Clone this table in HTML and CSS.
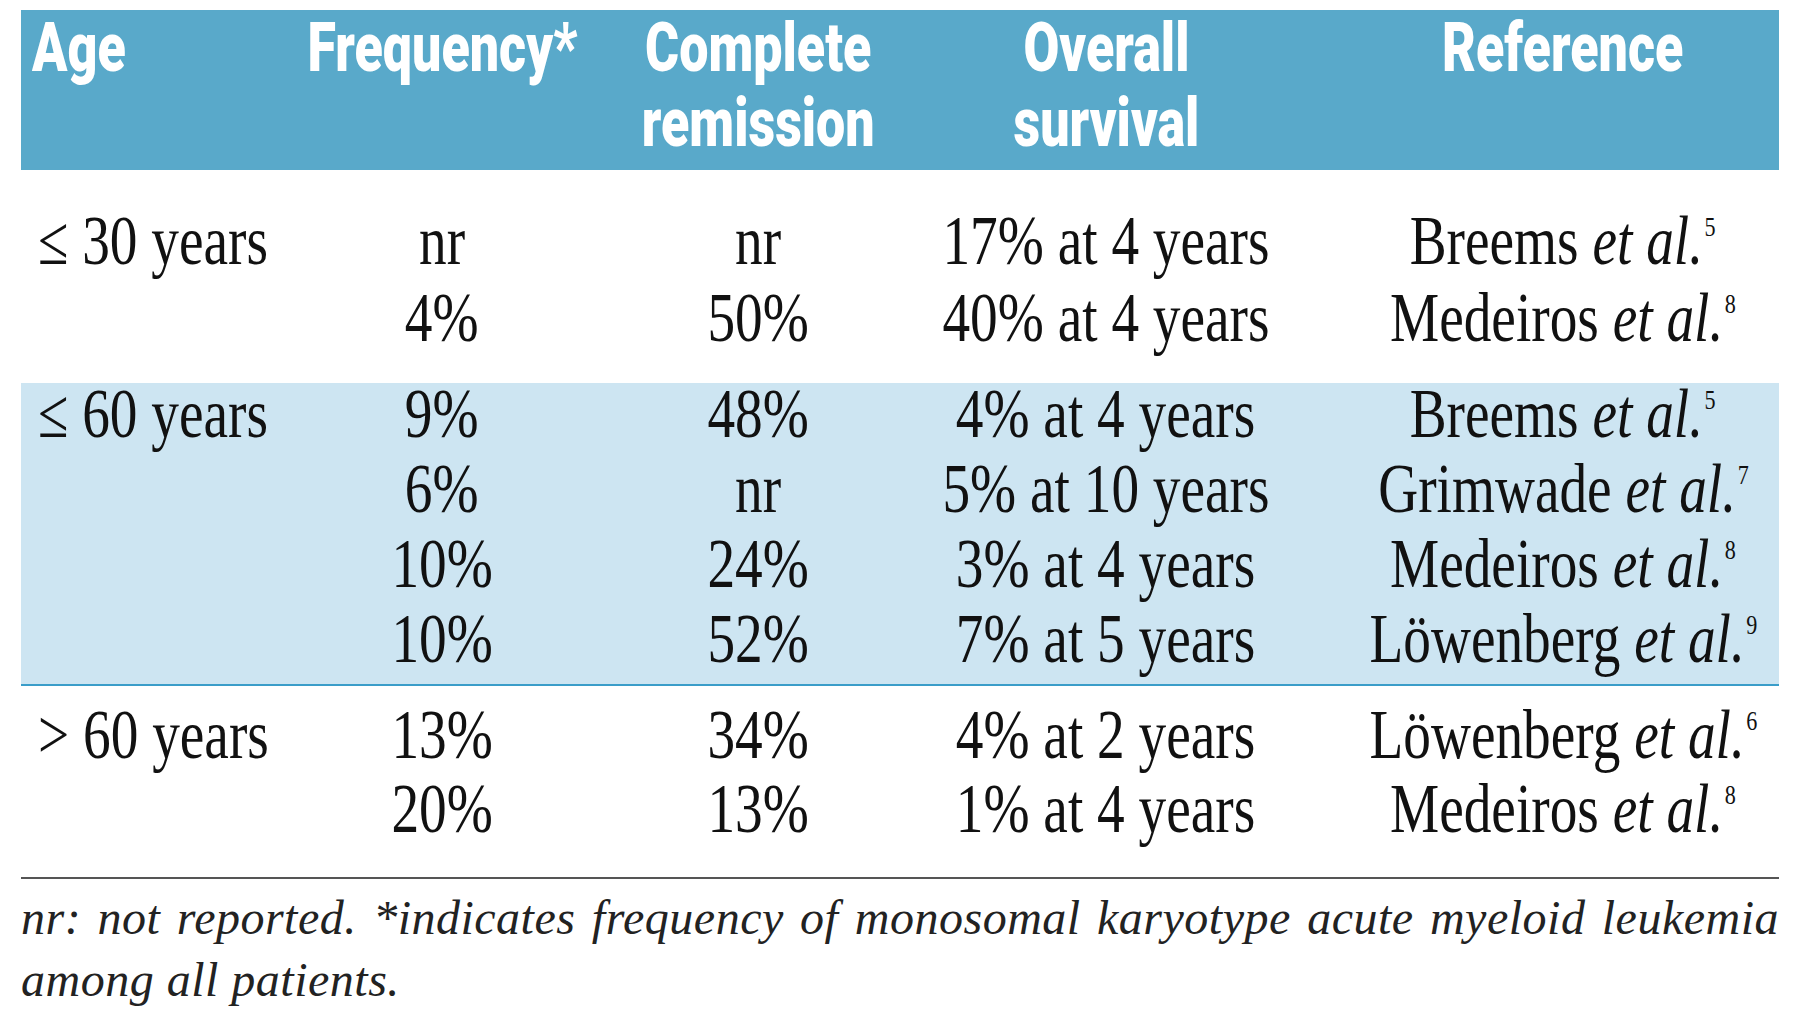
FILE: index.html
```html
<!DOCTYPE html>
<html>
<head>
<meta charset="utf-8">
<link rel="stylesheet" href="styles.css">
</head>
<body>
<div class="table">
  <div class="head grid">
    <div class="c age"><span class="hx">Age</span></div>
    <div class="c"><span class="hx">Frequency*</span></div>
    <div class="c"><span class="hx">Complete<br>remission</span></div>
    <div class="c"><span class="hx">Overall<br>survival</span></div>
    <div class="c ref"><span class="hx">Reference</span></div>
  </div>

  <div class="group g1 grid">
    <div class="c age"><span class="t">≤ 30 years</span></div>
    <div class="c"><span class="t">nr</span></div>
    <div class="c"><span class="t">nr</span></div>
    <div class="c"><span class="t">17% at 4 years</span></div>
    <div class="c ref"><span class="t">Breems <em>et al.</em><sup class="n">5</sup></span></div>

    <div class="c age"></div>
    <div class="c"><span class="t">4%</span></div>
    <div class="c"><span class="t">50%</span></div>
    <div class="c"><span class="t">40% at 4 years</span></div>
    <div class="c ref"><span class="t">Medeiros <em>et al.</em><sup class="n">8</sup></span></div>
  </div>

  <div class="group g2 grid">
    <div class="c age"><span class="t">≤ 60 years</span></div>
    <div class="c"><span class="t">9%</span></div>
    <div class="c"><span class="t">48%</span></div>
    <div class="c"><span class="t">4% at 4 years</span></div>
    <div class="c ref"><span class="t">Breems <em>et al.</em><sup class="n">5</sup></span></div>

    <div class="c age"></div>
    <div class="c"><span class="t">6%</span></div>
    <div class="c"><span class="t">nr</span></div>
    <div class="c"><span class="t">5% at 10 years</span></div>
    <div class="c ref"><span class="t">Grimwade <em>et al.</em><sup class="n">7</sup></span></div>

    <div class="c age"></div>
    <div class="c"><span class="t">10%</span></div>
    <div class="c"><span class="t">24%</span></div>
    <div class="c"><span class="t">3% at 4 years</span></div>
    <div class="c ref"><span class="t">Medeiros <em>et al.</em><sup class="n">8</sup></span></div>

    <div class="c age"></div>
    <div class="c"><span class="t">10%</span></div>
    <div class="c"><span class="t">52%</span></div>
    <div class="c"><span class="t">7% at 5 years</span></div>
    <div class="c ref"><span class="t">Löwenberg <em>et al.</em><sup class="n">9</sup></span></div>
  </div>

  <div class="group g3 grid">
    <div class="c age"><span class="t">&gt; 60 years</span></div>
    <div class="c"><span class="t">13%</span></div>
    <div class="c"><span class="t">34%</span></div>
    <div class="c"><span class="t">4% at 2 years</span></div>
    <div class="c ref"><span class="t">Löwenberg <em>et al.</em><sup class="n">6</sup></span></div>

    <div class="c age"></div>
    <div class="c"><span class="t">20%</span></div>
    <div class="c"><span class="t">13%</span></div>
    <div class="c"><span class="t">1% at 4 years</span></div>
    <div class="c ref"><span class="t">Medeiros <em>et al.</em><sup class="n">8</sup></span></div>
  </div>

  <p class="note">nr: not reported. *indicates frequency of monosomal karyotype acute myeloid leukemia among all patients.</p>
</div>
</body>
</html>
```

FILE: styles.css
```css
body {
  margin: 0;
  background: #ffffff;
}

.table {
  margin: 10px 0 0 21px;
  width: 1758px;
}

.grid {
  display: grid;
  grid-template-columns: 279px 284px 348px 348px 499px;
}

.head {
  background: #59a9ca;
  height: 160px;
  box-sizing: border-box;
  padding-top: 1px;
  color: #ffffff;
  font-family: Roboto, "Liberation Sans", Arial, sans-serif;
  font-weight: 900;
  font-size: 68px;
  line-height: 75px;
}

.c {
  display: flex;
  justify-content: center;
  align-items: flex-start;
  text-align: center;
  white-space: nowrap;
  min-width: 0;
}

.c.age {
  justify-content: flex-start;
  text-align: left;
}

.head .age {
  padding-left: 11px;
}

.ref {
  padding-left: 67px;
}

.hx {
  display: inline-block;
  flex: none;
  transform: scaleX(0.765);
}

.group {
  font-family: "Liberation Serif", "Times New Roman", serif;
  font-size: 70px;
  line-height: 61px;
  color: #111111;
}

.group .age {
  padding-left: 17px;
}

.t {
  display: inline-block;
  flex: none;
  transform: scaleX(0.79);
}

.age .hx,
.age .t {
  transform-origin: left center;
}

.g1 {
  padding: 40px 0 35px;
  row-gap: 16px;
}

.g2 {
  background: #cde5f2;
  padding: 0 0 15px;
  row-gap: 14px;
  border-bottom: 2px solid #3a9dc9;
}

.g3 {
  padding: 18px 0 38px;
  row-gap: 13px;
}

em {
  font-style: italic;
}

sup.n {
  font-size: 28px;
  line-height: 0;
  vertical-align: 28px;
  margin-left: 2px;
  font-style: normal;
}

.note {
  margin: 0;
  border-top: 2px solid #555555;
  padding-top: 8px;
  font-family: "Liberation Serif", "Times New Roman", serif;
  font-style: italic;
  font-size: 48px;
  line-height: 62px;
  text-align: justify;
  letter-spacing: 0.5px;
  color: #222222;
}
```
